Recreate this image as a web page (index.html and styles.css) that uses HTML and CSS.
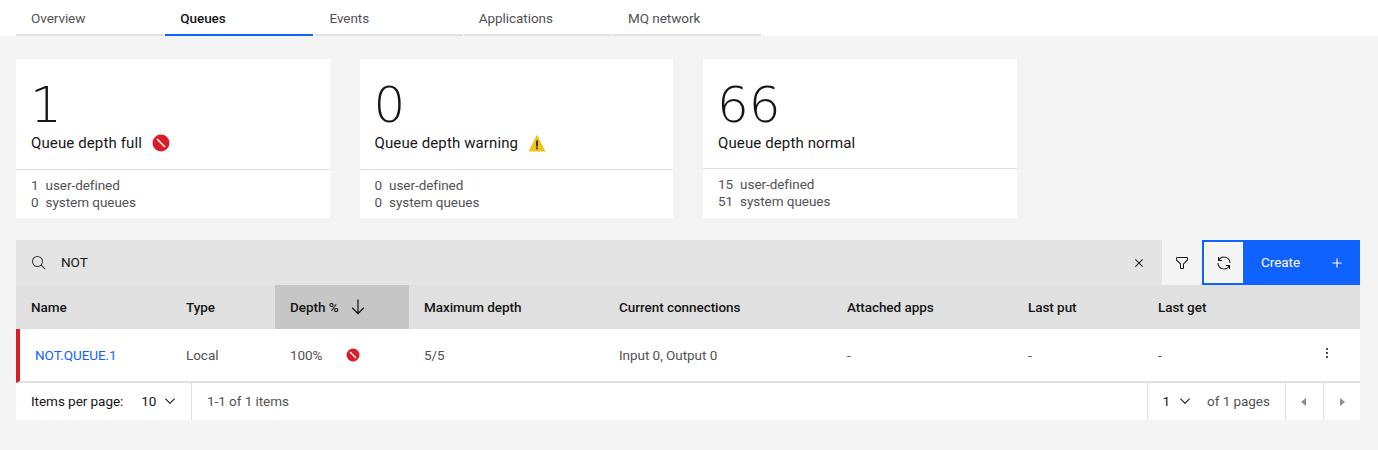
FILE: index.html
```html
<!DOCTYPE html>
<html lang="en">
<head>
<meta charset="utf-8">
<title>Queues</title>
<link rel="stylesheet" href="styles.css">
</head>
<body>
<nav class="tabs-bar">
  <a class="tab">Overview</a>
  <a class="tab tab-active">Queues</a>
  <a class="tab">Events</a>
  <a class="tab">Applications</a>
  <a class="tab">MQ network</a>
</nav>
<main class="content">
  <section class="cards">
    <article class="card">
      <div class="card-top">
        <div class="big">1</div>
        <div class="card-label">Queue depth full
          <svg class="ic-status" viewBox="0 0 18 18"><circle cx="9" cy="9" r="8.5" fill="#da1e28"/><path d="M5 5l8 8" stroke="#fff" stroke-width="1.6"/></svg>
        </div>
      </div>
      <div class="card-bottom">
        <div><span class="n">1</span>user-defined</div>
        <div><span class="n">0</span>system queues</div>
      </div>
    </article>
    <article class="card">
      <div class="card-top">
        <div class="big">0</div>
        <div class="card-label">Queue depth warning
          <svg class="ic-status" viewBox="0 0 18 18"><path d="M9 .5l8.5 17H.5z" fill="#f1c21b"/><path d="M8.2 6.5h1.6v6H8.2zM8.2 13.4h1.6v1.8H8.2z" fill="#161616"/></svg>
        </div>
      </div>
      <div class="card-bottom">
        <div><span class="n">0</span>user-defined</div>
        <div><span class="n">0</span>system queues</div>
      </div>
    </article>
    <article class="card card-normal">
      <div class="card-top">
        <div class="big">66</div>
        <div class="card-label">Queue depth normal</div>
      </div>
      <div class="card-bottom">
        <div><span class="n">15</span>user-defined</div>
        <div><span class="n">51</span>system queues</div>
      </div>
    </article>
  </section>

  <section class="toolbar">
    <div class="search">
      <svg class="ic16 search-ic" viewBox="0 0 32 32"><path d="M29 27.586l-7.552-7.552a11.018 11.018 0 1 0-1.414 1.414L27.586 29zM4 13a9 9 0 1 1 9 9 9.01 9.01 0 0 1-9-9z"/></svg>
      <span class="search-text">NOT</span>
      <svg class="ic16 search-x" viewBox="0 0 32 32"><path d="M24 9.4L22.6 8 16 14.6 9.4 8 8 9.4 14.6 16 8 22.6 9.4 24 16 17.4 22.6 24 24 22.6 17.4 16 24 9.4z"/></svg>
    </div>
    <div class="tool-btn">
      <svg class="ic16" viewBox="0 0 32 32"><path d="M18 28h-4a2 2 0 0 1-2-2v-7.59L4.59 11A2 2 0 0 1 4 9.59V6a2 2 0 0 1 2-2h20a2 2 0 0 1 2 2v3.59a2 2 0 0 1-.59 1.41L20 18.41V26a2 2 0 0 1-2 2zM6 6v3.59l8 8V26h4v-8.41l8-8V6z"/></svg>
    </div>
    <div class="tool-btn tool-focus">
      <svg class="ic16" viewBox="0 0 32 32"><path d="M12 10H6.78A11 11 0 0 1 27 16h2A13 13 0 0 0 6 7.68V4H4v8h8zM20 22h5.22A11 11 0 0 1 5 16H3a13 13 0 0 0 23 8.32V28h2v-8h-8z"/></svg>
    </div>
    <div class="create">
      <span class="create-text">Create</span>
      <svg class="ic-plus" viewBox="0 0 32 32"><path d="M17 15V8h-2v7H8v2h7v7h2v-7h7v-2h-7z"/></svg>
    </div>
  </section>

  <table class="grid">
    <thead>
      <tr>
        <th class="c-name">Name</th>
        <th class="c-type">Type</th>
        <th class="c-depth sorted">Depth %<svg class="ic-sort" viewBox="0 0 32 32"><path d="M24.59 16.59L17 24.17V4h-2v20.17l-7.59-7.58L6 18l10 10 10-10-1.41-1.41z"/></svg></th>
        <th class="c-max">Maximum depth</th>
        <th class="c-conn">Current connections</th>
        <th class="c-apps">Attached apps</th>
        <th class="c-put">Last put</th>
        <th class="c-get">Last get</th>
        <th class="c-act"></th>
      </tr>
    </thead>
    <tbody>
      <tr>
        <td class="name-cell"><a class="link">NOT.QUEUE.1</a></td>
        <td>Local</td>
        <td><span class="pct">100%</span><svg class="ic-small" viewBox="0 0 14 14"><circle cx="7" cy="7" r="6.5" fill="#da1e28"/><path d="M4 4l6 6" stroke="#fff" stroke-width="1.4"/></svg></td>
        <td>5/5</td>
        <td>Input 0, Output 0</td>
        <td>-</td>
        <td>-</td>
        <td>-</td>
        <td class="act-cell"><svg class="ic16 ic-dark" viewBox="0 0 32 32"><circle cx="16" cy="8" r="2"/><circle cx="16" cy="16" r="2"/><circle cx="16" cy="24" r="2"/></svg></td>
      </tr>
    </tbody>
  </table>

  <footer class="pager">
    <div class="pager-left">
      <span class="ipp">Items per page:</span>
      <span class="ipp-val">10</span>
      <svg class="ic16 ic-dark" viewBox="0 0 32 32"><path d="M16 22L6 12l1.4-1.4 8.6 8.6 8.6-8.6L26 12z"/></svg>
    </div>
    <div class="pager-count">1-1 of 1 items</div>
    <div class="pager-page">
      <span class="page-val">1</span>
      <svg class="ic16 ic-dark" viewBox="0 0 32 32"><path d="M16 22L6 12l1.4-1.4 8.6 8.6 8.6-8.6L26 12z"/></svg>
      <span class="page-of">of 1 pages</span>
    </div>
    <div class="pager-btn"><svg class="ic16 ic-grey" viewBox="0 0 32 32"><path d="M20 24l-10-8 10-8z"/></svg></div>
    <div class="pager-btn"><svg class="ic16 ic-grey" viewBox="0 0 32 32"><path d="M12 8l10 8-10 8z"/></svg></div>
  </footer>
</main>
</body>
</html>
```

FILE: styles.css
```css
* { box-sizing: border-box; }
html, body { margin: 0; padding: 0; }
body {
  width: 1378px;
  height: 450px;
  overflow: hidden;
  background: #f4f4f4;
  color: #161616;
  font-family: Roboto, "Noto Sans", sans-serif;
  font-size: 13.5px;
  letter-spacing: -0.05px;
}
.tabs-bar {
  display: flex;
  gap: 1.25px;
  height: 36px;
  padding-left: 16px;
  background: #fff;
}
.tab {
  width: 148px;
  height: 36px;
  padding: 8px 0 0 15px;
  border-bottom: 2px solid #e0e0e0;
  color: #525252;
  line-height: 20px;
}
.tab-active {
  border-bottom-color: #0f62fe;
  color: #161616;
  font-weight: 500;
}
.content { padding: 23px 18px 0 16px; }
.cards { display: flex; gap: 30px; height: 159px; margin-bottom: 22px; }
.card {
  display: flex;
  flex-direction: column;
  width: 313.5px;
  background: #fff;
}
.card-top {
  height: 111px;
  padding: 15px 15px 0;
  border-bottom: 1px solid #e0e0e0;
}
.card-normal .card-top { height: 110px; }
.big {
  margin-left: -1px;
  font-family: "DejaVu Sans", sans-serif;
  font-size: 50px;
  font-weight: 200;
  line-height: 62px;
  letter-spacing: 0;
}
.card-label {
  display: flex;
  align-items: center;
  gap: 10px;
  height: 22px;
  margin-top: -4px;
  font-size: 15px;
  line-height: 22px;
  letter-spacing: 0.12px;
}
.ic-status { width: 18px; height: 18px; }
.card-bottom {
  padding: 7px 15px 0;
  color: #525252;
  line-height: 17px;
}
.n { margin-right: 7px; }
.toolbar { display: flex; height: 45px; }
.search {
  display: flex;
  align-items: center;
  width: 1146px;
  padding: 0 15px;
  background: #e4e4e4;
}
.search-text { margin: 0 0 2px 14px; }
.search-x { margin-left: auto; }
.ic16 { width: 16px; height: 16px; fill: #161616; }
.search-ic { fill: #393939; }
.tool-btn {
  display: flex;
  align-items: center;
  justify-content: center;
  width: 40px;
}
.tool-focus {
  width: 43px;
  border: 2px solid #0f62fe;
  box-shadow: inset 0 0 0 1px #fff;
}
.create {
  display: flex;
  align-items: center;
  justify-content: space-between;
  width: 115px;
  padding: 0 14px 0 16px;
  background: #0f62fe;
  color: #fff;
}
.create-text { margin-bottom: 2px; }
.ic-plus { width: 18px; height: 18px; fill: #fff; }
.grid {
  width: 1344px;
  table-layout: fixed;
  border-collapse: separate;
  border-spacing: 0;
}
.grid th {
  height: 44px;
  padding: 0 0 1px 15px;
  background: #e0e0e0;
  text-align: left;
  font-size: 13.5px;
  font-weight: 500;
}
.grid td {
  height: 54px;
  padding: 0 0 1px 15px;
  background: #fff;
  border-bottom: 2px solid #e0e0e0;
  color: #525252;
  font-size: 13.5px;
}
.c-name { width: 155px; }
.c-type { width: 104px; }
.c-depth { width: 134px; }
.c-max { width: 195px; }
.c-conn { width: 228px; }
.c-apps { width: 181px; }
.c-put { width: 130px; }
.c-get { width: 169px; }
.c-act { width: 48px; }
.grid th.sorted { background: #c6c6c6; }
.ic-sort { width: 20px; height: 20px; margin-left: 9px; vertical-align: -5px; fill: #161616; }
.grid td.name-cell { border-left: 4px solid #da1e28; padding-left: 15px; }
.link { color: #0f62fe; }
.pct { display: inline-block; width: 56px; }
.ic-small { width: 14px; height: 14px; vertical-align: -2px; }
.grid td.act-cell { padding-left: 7px; }
.pager {
  display: flex;
  align-items: stretch;
  width: 1344px;
  height: 37px;
  padding-bottom: 0;
  background: #fff;
}
.pager-left {
  display: flex;
  align-items: center;
  width: 176px;
  padding: 0 0 2px 15px;
  border-right: 1px solid #e0e0e0;
}
.ipp-val { margin-left: 18px; }
.pager-left .ic16 { margin-left: 6px; }
.pager-count {
  flex: 1;
  display: flex;
  align-items: center;
  padding: 0 0 2px 15px;
  color: #525252;
}
.pager-page {
  display: flex;
  align-items: center;
  width: 138.5px;
  padding: 0 0 2px 15px;
  border-left: 1px solid #e0e0e0;
}
.pager-page .ic16 { margin-left: 7px; }
.page-of { margin-left: 14px; color: #525252; }
.pager-btn {
  display: flex;
  align-items: center;
  justify-content: center;
  width: 37.5px;
  border-left: 1px solid #e0e0e0;
}
.ic16.ic-grey { fill: #8d8d8d; }
```
